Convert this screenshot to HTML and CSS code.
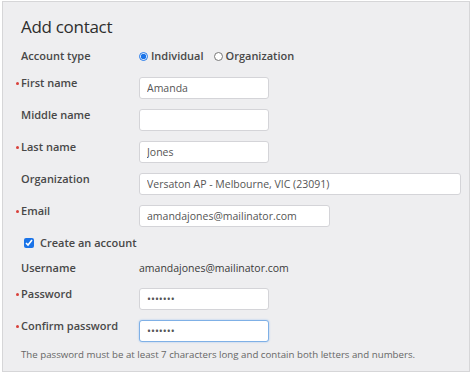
FILE: index.html
```html
<!DOCTYPE html>
<html lang="en">
<head>
    <meta charset="UTF-8">
    <meta name="viewport" content="width=device-width, initial-scale=1.0">
    <title>Add contact</title>
    <link rel="stylesheet" href="styles.css">
</head>
<body>
    <div class="panel">
        <h1 class="title">Add contact</h1>

        <form class="contact-form">
            <div class="row row-type">
                <label class="label">Account type</label>
                <div class="radios">
                    <label class="radio"><input type="radio" name="type" checked>Individual</label>
                    <label class="radio"><input type="radio" name="type">Organization</label>
                </div>
            </div>

            <div class="row">
                <label class="label required">First name</label>
                <input class="field" type="text" value="Amanda">
            </div>

            <div class="row">
                <label class="label">Middle name</label>
                <input class="field" type="text">
            </div>

            <div class="row">
                <label class="label required">Last name</label>
                <input class="field" type="text" value="Jones">
            </div>

            <div class="row">
                <label class="label">Organization</label>
                <input class="field field-wide" type="text" value="Versaton AP - Melbourne, VIC (23091)">
            </div>

            <div class="row">
                <label class="label required">Email</label>
                <input class="field field-mid" type="text" value="amandajones@mailinator.com">
            </div>

            <div class="row row-check">
                <label class="check"><input type="checkbox" checked>Create an account</label>
            </div>

            <div class="row row-user">
                <label class="label">Username</label>
                <span class="value">amandajones@mailinator.com</span>
            </div>

            <div class="row">
                <label class="label required">Password</label>
                <input class="field" type="password" value="1234567">
            </div>

            <div class="row row-last">
                <label class="label required">Confirm password</label>
                <input class="field field-focus" type="password" value="1234567">
            </div>

            <p class="note">The password must be at least 7 characters long and contain both letters and numbers.</p>
        </form>
    </div>
</body>
</html>
```

FILE: styles.css
```css
/* Add contact form */
body {
    margin: 0;
    background-color: #fff;
    font-family: "Open Sans", "Lato", sans-serif;
    color: #3a3a3a;
}

.panel {
    width: 468px;
    height: 371px;
    margin: 1px 0 0 2px;
    border: 1px solid #d6d6d8;
    background-color: #eeeef0;
    box-sizing: border-box;
}

.title {
    margin: 0;
    padding: 12px 0 0 18px;
    height: 34px;
    font-size: 17px;
    font-weight: 400;
    letter-spacing: -0.3px;
    line-height: 26px;
    color: #2d2d2d;
    box-sizing: border-box;
}

.contact-form {
    padding-left: 18px;
    margin: 0;
}

.row {
    display: grid;
    grid-template-columns: 118px 1fr;
    align-items: start;
    height: 32px;
}

.row-type {
    height: 26px;
    padding-top: 12px;
}

.row-check {
    height: 25px;
    display: block;
}

.row-user {
    height: 26px;
}

.row-last {
    height: 30px;
}

.label {
    position: relative;
    padding-top: 1px;
    font-size: 11px;
    font-weight: 600;
    line-height: 16px;
    color: #484848;
}

.row-type .label {
    padding-top: 0;
}

.required::before {
    content: "";
    position: absolute;
    left: -5px;
    top: 8px;
    width: 3px;
    height: 3px;
    border-radius: 50%;
    background-color: #d9403a;
}

.radios {
    display: flex;
    align-items: flex-start;
    gap: 10px;
    font-size: 11px;
    font-weight: 600;
    line-height: 16px;
    color: #484848;
}

.radio {
    display: flex;
    align-items: center;
    height: 16px;
}

.radio input {
    width: 9px;
    height: 9px;
    margin: 0 3px 0 0;
    accent-color: #1a73e8;
}

.field {
    width: 130px;
    height: 22px;
    margin-top: 3px;
    padding: 0 7px;
    border: 1px solid #d4d4d8;
    border-radius: 3px;
    background-color: #fff;
    font-family: "Open Sans", "Lato", sans-serif;
    font-size: 10.5px;
    color: #555;
    box-sizing: border-box;
    outline: none;
}

.field-wide {
    width: 322px;
}

.field-mid {
    width: 191px;
}

.field-focus {
    border-color: #7fb0e6;
    box-shadow: 0 0 2px #9cc3ef;
}

.check {
    display: flex;
    align-items: center;
    padding-top: 1px;
    font-size: 11px;
    font-weight: 600;
    line-height: 16px;
    color: #484848;
}

.check input {
    width: 10px;
    height: 10px;
    margin: 0 6px 0 3px;
    accent-color: #1a73e8;
}

.value {
    padding-top: 1px;
    font-size: 10.5px;
    line-height: 16px;
    color: #3a3a3a;
}

.note {
    margin: 0;
    font-size: 9.7px;
    line-height: 16px;
    color: #666;
}
```
